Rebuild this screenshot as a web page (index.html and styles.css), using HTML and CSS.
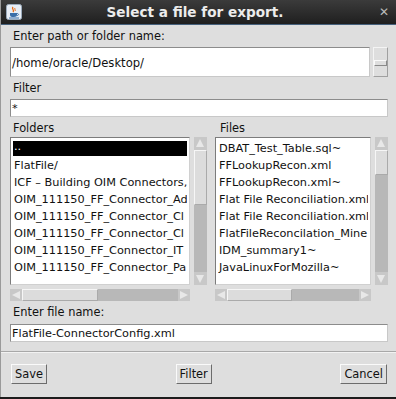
FILE: index.html
```html
<!DOCTYPE html>
<html lang="en">
<head>
    <meta charset="UTF-8">
    <title>Select a file for export.</title>
    <link rel="stylesheet" href="styles.css">
</head>
<body>
    <div class="window">
        <div class="titlebar">
            <svg class="app-icon" width="16" height="16" viewBox="0 0 16 16">
                <rect x="0.5" y="0.5" width="15" height="15" rx="2" fill="#e8eef6" stroke="#9aaabb"/>
                <path d="M7 3 C5 5 9 6 7 8" stroke="#e86a10" stroke-width="1.3" fill="none"/>
                <path d="M9 4 C8 5 10 6 9 7" stroke="#e86a10" stroke-width="1" fill="none"/>
                <path d="M4 9 H11 V11 C11 12 10 13 8 13 H6 C5 13 4 12 4 11 Z" fill="#3b6ea8"/>
                <path d="M11 9.5 C13 9.5 13 11.5 11 11.5" stroke="#3b6ea8" fill="none"/>
                <rect x="3" y="13.5" width="10" height="1" fill="#3b6ea8"/>
            </svg>
            <span class="title">Select a file for export.</span>
            <span class="close">&#x2715;</span>
        </div>

        <div class="content">
            <div class="label">Enter path or folder name:</div>
            <div class="path-row">
                <div class="field path-field">/home/oracle/Desktop/</div>
                <div class="path-btn"><span class="path-knob"></span></div>
            </div>

            <div class="label">Filter</div>
            <div class="field">*</div>

            <div class="lists">
                <div class="col col-folders">
                    <div class="label">Folders</div>
                    <div class="list-row">
                        <div class="list list-folders">
                            <div class="item selected">..</div>
                            <div class="item">FlatFile/</div>
                            <div class="item">ICF &ndash; Building OIM Connectors,</div>
                            <div class="item">OIM_111150_FF_Connector_Ad</div>
                            <div class="item">OIM_111150_FF_Connector_Cl</div>
                            <div class="item">OIM_111150_FF_Connector_Cl</div>
                            <div class="item">OIM_111150_FF_Connector_IT</div>
                            <div class="item">OIM_111150_FF_Connector_Pa</div>
                        </div>
                        <div class="vscroll">
                            <div class="arrow up"></div>
                            <div class="vthumb folders-vthumb"></div>
                            <div class="vtrack"></div>
                            <div class="arrow down"></div>
                        </div>
                    </div>
                    <div class="hscroll hscroll-folders">
                        <div class="arrow left"></div>
                        <div class="hthumb folders-hthumb"></div>
                        <div class="htrack"></div>
                        <div class="arrow right"></div>
                    </div>
                </div>

                <div class="col col-files">
                    <div class="label files-label">Files</div>
                    <div class="list-row">
                        <div class="list list-files">
                            <div class="item">DBAT_Test_Table.sql~</div>
                            <div class="item">FFLookupRecon.xml</div>
                            <div class="item">FFLookupRecon.xml~</div>
                            <div class="item">Flat File Reconciliation.xml</div>
                            <div class="item">Flat File Reconciliation.xml~</div>
                            <div class="item">FlatFileReconcilation_Mine.</div>
                            <div class="item">IDM_summary1~</div>
                            <div class="item">JavaLinuxForMozilla~</div>
                        </div>
                        <div class="vscroll">
                            <div class="arrow up"></div>
                            <div class="vthumb files-vthumb"></div>
                            <div class="vtrack"></div>
                            <div class="arrow down"></div>
                        </div>
                    </div>
                    <div class="hscroll hscroll-files">
                        <div class="arrow left"></div>
                        <div class="hthumb files-hthumb"></div>
                        <div class="htrack"></div>
                        <div class="arrow right"></div>
                    </div>
                </div>
            </div>

            <div class="label filename-label">Enter file name:</div>
            <div class="field filename-field">FlatFile-ConnectorConfig.xml</div>
        </div>

        <div class="separator"></div>

        <div class="buttons">
            <button class="btn">Save</button>
            <button class="btn">Filter</button>
            <button class="btn">Cancel</button>
        </div>
    </div>
</body>
</html>
```

FILE: styles.css
```css
body {
    margin: 0;
    background: #1c1c1c;
    font-family: "DejaVu Sans", sans-serif;
    font-size: 11.3px;
    color: #111;
}
.window {
    width: 396px;
    height: 397px;
    background: #dedede;
    overflow: hidden;
    border-left: 1px solid #9a9a9a;
    box-sizing: border-box;
}
.titlebar {
    height: 24px;
    background: linear-gradient(#3b3b3b, #1f1f1f);
    border-bottom: 1px solid #45607c;
    display: flex;
    align-items: center;
    color: #fff;
}
.app-icon {
    margin-left: 5px;
}
.title {
    flex: 1;
    text-align: center;
    font-weight: bold;
    font-size: 13.6px;
    margin-left: -4px;
    color: #ececec;
}
.close {
    width: 24px;
    text-align: center;
    font-size: 12px;
    font-weight: bold;
    color: #bbb;
}
.content {
    padding: 0 8px 0 9px;
}
.label {
    height: 16px;
    line-height: 16px;
    margin-top: 3px;
    padding-left: 3px;
    font-size: 11.4px;
}
.field {
    background: #fff;
    border: 1px solid #8c8c8c;
    border-right-color: #c8c8c8;
    border-bottom-color: #c8c8c8;
    height: 18px;
    line-height: 18px;
    box-sizing: border-box;
    padding-left: 1px;
    margin-top: 3px;
    white-space: nowrap;
    overflow: hidden;
}
.path-row {
    display: flex;
    margin-top: 3px;
    height: 30px;
}
.path-field {
    flex: 1;
    height: 30px;
    line-height: 30px;
    margin-top: 0;
    font-size: 11.6px;
}
.path-btn {
    width: 15px;
    margin-left: 3px;
    border: 1px solid #a0a0a0;
    border-top-color: #f4f4f4;
    border-left-color: #f4f4f4;
    box-sizing: border-box;
    display: flex;
    align-items: center;
    justify-content: center;
}
.path-knob {
    width: 11px;
    height: 4px;
    border: 1px solid #8a8a8a;
    border-top-color: #fafafa;
    border-left-color: #fafafa;
    margin-top: 2px;
}
.lists {
    display: flex;
    justify-content: space-between;
}
.col-folders {
    width: 197px;
}
.col-files {
    width: 173px;
}
.files-label {
    padding-left: 5px;
}
.list-row {
    display: flex;
    margin-top: 1px;
    height: 148px;
}
.list {
    background: #fff;
    border: 1px solid #7c7c7c;
    border-right-color: #d0d0d0;
    border-bottom-color: #d0d0d0;
    box-sizing: border-box;
    padding: 3px 2px 0 2px;
    overflow: hidden;
    white-space: nowrap;
}
.list-folders {
    width: 180px;
}
.list-files {
    width: 156px;
}
.item {
    height: 17px;
    line-height: 16px;
    padding-left: 1px;
    overflow: hidden;
}
.item.selected {
    background: #000;
    color: #fff;
    height: 15px;
    line-height: 12px;
    margin-bottom: 2px;
}
.vscroll {
    width: 13px;
    margin-left: 4px;
    display: flex;
    flex-direction: column;
    background: #bcbcbc;
}
.vthumb {
    background: #dcdcdc;
    border: 1px solid #aaa;
    border-top-color: #f6f6f6;
    border-left-color: #f6f6f6;
    box-sizing: border-box;
}
.folders-vthumb {
    height: 55px;
}
.files-vthumb {
    height: 25px;
}
.vtrack, .htrack {
    flex: 1;
    background: #b8b8b8;
}
.hscroll {
    display: flex;
    height: 12px;
    margin-top: 4px;
}
.hscroll-folders {
    width: 180px;
}
.hscroll-files {
    width: 156px;
}
.hthumb {
    background: #dcdcdc;
    border: 1px solid #aaa;
    border-top-color: #f6f6f6;
    border-left-color: #f6f6f6;
    box-sizing: border-box;
}
.folders-hthumb {
    width: 76px;
}
.files-hthumb {
    width: 65px;
}
.arrow {
    width: 13px;
    height: 13px;
    flex: none;
    background: #c8c8c8;
    position: relative;
}
.hscroll .arrow {
    width: 12px;
    height: 12px;
}
.arrow::after {
    content: "";
    position: absolute;
    width: 0;
    height: 0;
}
.arrow.up::after {
    left: 2px;
    top: 2px;
    border-left: 4px solid transparent;
    border-right: 4px solid transparent;
    border-bottom: 8px solid #e8e8e8;
}
.arrow.down::after {
    left: 2px;
    top: 3px;
    border-left: 4px solid transparent;
    border-right: 4px solid transparent;
    border-top: 8px solid #e8e8e8;
}
.arrow.left::after {
    left: 2px;
    top: 2px;
    border-top: 4px solid transparent;
    border-bottom: 4px solid transparent;
    border-right: 8px solid #e8e8e8;
}
.arrow.right::after {
    left: 2px;
    top: 2px;
    border-top: 4px solid transparent;
    border-bottom: 4px solid transparent;
    border-left: 8px solid #e8e8e8;
}
.filename-label {
    margin-top: 3px;
}
.filename-field {
    margin-top: 4px;
}
.separator {
    margin-top: 9px;
    height: 1px;
    background: #a8a8a8;
    border-bottom: 1px solid #f2f2f2;
}
.buttons {
    display: flex;
    justify-content: space-between;
    padding: 11px 9px 0 10px;
}
.btn {
    font-family: "DejaVu Sans", sans-serif;
    font-size: 11.4px;
    height: 20px;
    padding: 0 3px;
    background: #dedede;
    border: 1px solid #6c6c6c;
    border-top-color: #fafafa;
    border-left-color: #fafafa;
    color: #111;
}
```
